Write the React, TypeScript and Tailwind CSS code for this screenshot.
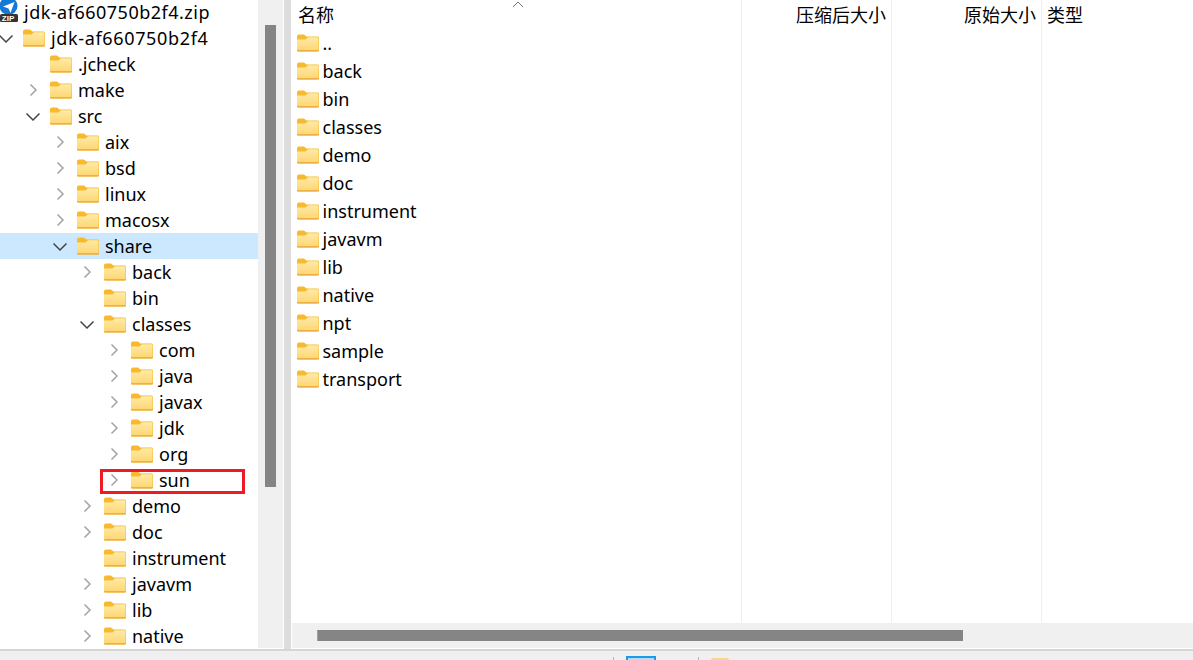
const font = "font-['Noto_Sans','Noto_Sans_CJK_SC',sans-serif]";

function Folder() {
  return (
    <svg width="22" height="18" viewBox="0 0 22 18" className="shrink-0">
      <defs>
        <linearGradient id="folderBody" x1="0" y1="0" x2="0" y2="1">
          <stop offset="0" stopColor="#ffeaa6" />
          <stop offset="1" stopColor="#fdd671" />
        </linearGradient>
      </defs>
      <path d="M0 2.5C0 1.4.8.5 2 .5h5l2.5 2H20.5c.8 0 1.5.7 1.5 1.500v12c0 .8-.7 1.500-1.500 1.500h-19C.7 17.500 0 16.800 0 16z" fill="#f8b92c" />
      <path d="M0 5.500h8.500l2.500-2.200h9.500c.5 0 1 .5 1 1V16c0 .6-.5 1-1 1H1c-.6 0-1-.4-1-1z" fill="url(#folderBody)" />
      <path d="M0 16h22v.5c0 .6-.5 1-1 1H1c-.6 0-1-.4-1-1z" fill="#eeb044" />
    </svg>
  );
}

function Chevron({ open }: { open?: boolean }) {
  return (
    <svg width="14" height="14" viewBox="0 0 14 14" fill="none" stroke={open ? '#444444' : '#a3a3a3'} strokeWidth="1.500" className="-ml-[3px] shrink-0">
      {open ? <path d="M.5 4.500l6.500 6.500 6.500-6.500" /> : <path d="M4.500 1.500l5.500 5.500-5.500 5.500" />}
    </svg>
  );
}

function ZipIcon() {
  return (
    <svg width="19" height="23" viewBox="0 0 19 23" className="shrink-0 -translate-y-[1px]">
      <circle cx="8.500" cy="6" r="9" fill="#1478d4" />
      <path d="M3 6.500L14.500 2 10.500 13 8.500 8.500z" fill="#ffffff" />
      <rect x="0" y="14" width="18" height="8" rx="1.500" fill="#333333" />
      <text x="8" y="21" textAnchor="middle" fontSize="8" fontWeight="700" fill="#ffffff" fontFamily="Liberation Sans">ZIP</text>
    </svg>
  );
}

type Node = { name: string; level: number; arrow?: 'open' | 'closed'; selected?: boolean };

const tree: Node[] = [
  { name: 'jdk-af660750b2f4', level: 0, arrow: 'open' },
  { name: '.jcheck', level: 1 },
  { name: 'make', level: 1, arrow: 'closed' },
  { name: 'src', level: 1, arrow: 'open' },
  { name: 'aix', level: 2, arrow: 'closed' },
  { name: 'bsd', level: 2, arrow: 'closed' },
  { name: 'linux', level: 2, arrow: 'closed' },
  { name: 'macosx', level: 2, arrow: 'closed' },
  { name: 'share', level: 2, arrow: 'open', selected: true },
  { name: 'back', level: 3, arrow: 'closed' },
  { name: 'bin', level: 3 },
  { name: 'classes', level: 3, arrow: 'open' },
  { name: 'com', level: 4, arrow: 'closed' },
  { name: 'java', level: 4, arrow: 'closed' },
  { name: 'javax', level: 4, arrow: 'closed' },
  { name: 'jdk', level: 4, arrow: 'closed' },
  { name: 'org', level: 4, arrow: 'closed' },
  { name: 'sun', level: 4, arrow: 'closed' },
  { name: 'demo', level: 3, arrow: 'closed' },
  { name: 'doc', level: 3, arrow: 'closed' },
  { name: 'instrument', level: 3 },
  { name: 'javavm', level: 3, arrow: 'closed' },
  { name: 'lib', level: 3, arrow: 'closed' },
  { name: 'native', level: 3, arrow: 'closed' },
];

const indents = ['w-0', 'w-[27px]', 'w-[54px]', 'w-[81px]', 'w-[108px]'];

const files = ['..', 'back', 'bin', 'classes', 'demo', 'doc', 'instrument', 'javavm', 'lib', 'native', 'npt', 'sample', 'transport'];

function TreeRow({ node }: { node: Node }) {
  return (
    <div className={`relative flex h-[26px] items-center pl-[2px] ${node.selected ? 'bg-[#cce8ff]' : ''}`}>
      <div className={`shrink-0 ${indents[node.level]}`} />
      <div className="flex w-[21px] shrink-0 justify-start">
        {node.arrow && <Chevron open={node.arrow === 'open'} />}
      </div>
      <Folder />
      <span className={`ml-[6px] text-[18px] leading-none text-black ${node.level === 0 ? 'tracking-[0.65px]' : ''}`}>{node.name}</span>
      {node.name === 'sun' && (
        <div className="absolute left-[100px] top-[2px] h-[25px] w-[145px] border-[3px] border-[#ed1c24]" />
      )}
    </div>
  );
}

export default function App() {
  return (
    <div className={`flex h-[660px] w-[1193px] flex-col overflow-hidden bg-white ${font}`}>
      <div className="flex h-[649px] shrink-0">
        <div className="flex w-[258px] shrink-0 flex-col overflow-hidden">
          <div className="flex h-[26px] shrink-0 -translate-y-px items-center">
            <ZipIcon />
            <span className="ml-[5px] text-[18px] leading-none tracking-[0.5px] text-black">jdk-af660750b2f4.zip</span>
          </div>
          <div className="-translate-y-px">
            {tree.map((n) => (
              <TreeRow key={n.name + n.level} node={n} />
            ))}
          </div>
        </div>
        <div className="mb-px mr-px w-[25px] shrink-0 bg-[#f0f0f0] pl-[7px] pt-[25px]">
          <div className="h-[462px] w-[11px] bg-[#858585]" />
        </div>
        <div className="w-[7px] shrink-0 bg-[#dcdcdc]" />
        <div className="flex min-w-0 flex-1 flex-col">
          <div className="relative flex flex-1 flex-col">
            <div className="flex h-[29px] shrink-0 items-center">
              <span className="relative ml-[7px] w-[444px] text-[18px] leading-none text-black">
                名称
                <svg width="12" height="7" viewBox="0 0 12 7" fill="none" stroke="#757575" className="absolute left-[214px] -top-[5px]">
                  <path d="M1 6l5-5 5 5" />
                </svg>
              </span>
              <span className="w-[145px] pr-px text-right text-[18px] leading-none text-black">压缩后大小</span>
              <span className="w-[150px] pr-px text-right text-[18px] leading-none text-black">原始大小</span>
              <span className="pl-[10px] text-[18px] leading-none text-black">类型</span>
            </div>
            {files.map((f) => (
              <div key={f} className="flex h-[28px] items-center pl-[6px]">
                <Folder />
                <span className="ml-[3.5px] text-[18px] leading-none text-black">{f}</span>
              </div>
            ))}
            <div className="absolute bottom-[1px] left-[450px] top-0 w-px bg-[#e8eff7]" />
            <div className="absolute bottom-[1px] left-[600px] top-0 w-px bg-[#e8eff7]" />
            <div className="absolute bottom-[1px] left-[750px] top-0 w-px bg-[#e8eff7]" />
          </div>
          <div className="mb-px ml-px flex h-[25px] shrink-0 items-center bg-[#f0f0f0] pl-[25px]">
            <div className="h-[11px] w-[646px] border-l border-[#a0a0a0] bg-[#858585]" />
          </div>
        </div>
      </div>
      <div className="relative h-[11px] shrink-0 border-t-2 border-[#d5d5d5] bg-[#f0f0f0]">
        <div className="absolute left-[613px] top-[6px] h-[3px] w-px bg-[#b5b5b5]" />
        <div className="absolute left-[626px] top-[5px] h-[5px] w-[30px] border-2 border-b-0 border-[#1a9be8] bg-[#b5dcf5]" />
        <div className="absolute left-[698px] top-[6px] h-[3px] w-px bg-[#b5b5b5]" />
        <div className="absolute left-[711px] top-[7px] h-[2px] w-[18px] rounded-t-sm bg-[#f5d78e]" />
      </div>
    </div>
  );
}
